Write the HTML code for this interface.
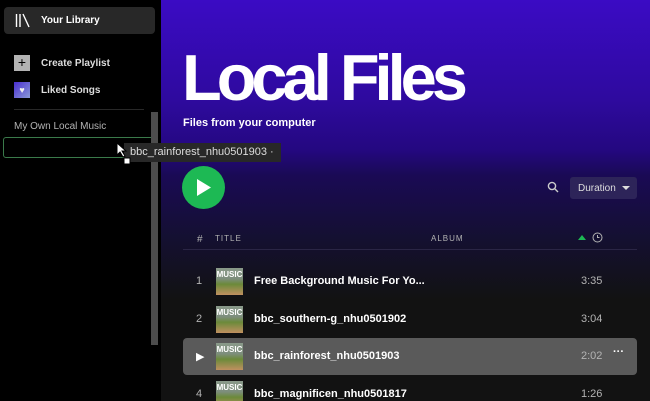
<!DOCTYPE html>
<html style="overflow:hidden;width:650px;height:401px"><head><style>
*{margin:0;padding:0;box-sizing:border-box}
body{width:650px;height:401px;overflow:hidden;background:#000;font-family:"Liberation Sans",sans-serif;position:relative;color:#fff}
.abs{position:absolute}
.side{left:0;top:0;width:161px;height:401px;background:#000}
.main{left:161px;top:0;width:489px;height:401px;background:linear-gradient(#3b0bc4 0px,#2e0a9e 100px,#240880 150px,#1a0a55 175px,#141030 240px,#121212 300px)}
.thumb{width:27px;height:27px;background:linear-gradient(#8a9a8a 0,#7d8e7c 40%,#6b8a3a 60%,#c09060 100%);font-size:8px;font-weight:bold;color:#fff;text-align:center;line-height:14px}
.row{left:183px;width:454px;height:37px;font-size:11px}
.row .n{position:absolute;left:13px;top:12px;color:#b3b3b3;font-size:11px}
.row .thumb{position:absolute;left:33px;top:5px}
.row .t{position:absolute;left:71px;top:12px;font-weight:bold;color:#fff}
.row .d{position:absolute;left:398px;top:12px;color:#b3b3b3}
</style></head><body>
<div class="abs side">
 <div class="abs" style="left:4px;top:7px;width:151px;height:27px;background:#282828;border-radius:4px"></div>
 <svg class="abs" style="left:15px;top:13px" width="16" height="15"><path d="M1.5 1 V14 M5 1 V14 M8 1 L14 14" stroke="#fff" stroke-width="1.4" fill="none"/></svg>
 <div class="abs" style="left:41px;top:15px;font-size:10px;font-weight:bold">Your Library</div>
 <div class="abs" style="left:14px;top:55px;width:16px;height:16px;background:#b3b3b3;color:#000;font-size:14px;text-align:center;line-height:15px">+</div>
 <div class="abs" style="left:41px;top:58px;font-size:10px;font-weight:bold;color:#ddd">Create Playlist</div>
 <div class="abs" style="left:14px;top:82px;width:16px;height:16px;background:linear-gradient(135deg,#4a2fd0,#8a9ad8);color:#eee;font-size:9px;text-align:center;line-height:16px">♥</div>
 <div class="abs" style="left:41px;top:85px;font-size:10px;font-weight:bold;color:#ddd">Liked Songs</div>
 <div class="abs" style="left:14px;top:109px;width:130px;height:1px;background:#282828"></div>
 <div class="abs" style="left:14px;top:121px;font-size:10px;color:#b3b3b3">My Own Local Music</div>
 <div class="abs" style="left:3px;top:137px;width:152px;height:21px;border:1px solid #3a7a4a;border-radius:3px"></div>
 <div class="abs" style="left:151px;top:112px;width:7px;height:233px;background:#4d4d4d"></div>
</div>
<div class="abs main"></div>
<div class="abs" style="left:182px;top:43px;font-size:65px;font-weight:bold;letter-spacing:-5px;line-height:70px">Local Files</div>
<div class="abs" style="left:183px;top:117px;font-size:11px;font-weight:bold">Files from your computer</div>
<div class="abs" style="left:124px;top:143px;width:157px;height:19px;background:#282828"></div>
<div class="abs" style="left:130px;top:146px;font-size:11px;color:#ddd">bbc_rainforest_nhu0501903 ·</div>
<svg class="abs" style="left:115px;top:142px" width="16" height="22"><path d="M2 1 L2 13 L5 10 L8 15 L10 14 L7 9 L11 9 Z" fill="#fff" stroke="#000" stroke-width="1"/><rect x="9" y="16" width="6" height="6" fill="#fff" stroke="#000"/></svg>
<div class="abs" style="left:182px;top:166px;width:43px;height:43px;border-radius:50%;background:#1db954"></div>
<svg class="abs" style="left:196px;top:178px" width="16" height="19"><path d="M1 1 L15 9.5 L1 18 Z" fill="#fff"/></svg>
<svg class="abs" style="left:547px;top:181px" width="12" height="12"><circle cx="5" cy="5" r="3.6" fill="none" stroke="#ccc" stroke-width="1.4"/><path d="M7.8 7.8 L11 11" stroke="#ccc" stroke-width="1.4"/></svg>
<div class="abs" style="left:570px;top:177px;width:67px;height:22px;background:#2d2459;border-radius:3px"></div>
<div class="abs" style="left:578px;top:183px;font-size:10px;color:#ddd">Duration</div>
<svg class="abs" style="left:622px;top:186px" width="8" height="5"><path d="M0 0 L8 0 L4 4 Z" fill="#ddd"/></svg>
<div class="abs" style="left:197px;top:234px;font-size:10px;color:#b3b3b3">#</div>
<div class="abs" style="left:215px;top:234px;font-size:8px;color:#b3b3b3;letter-spacing:1px">TITLE</div>
<div class="abs" style="left:431px;top:234px;font-size:8px;color:#b3b3b3;letter-spacing:1px">ALBUM</div>
<svg class="abs" style="left:578px;top:235px" width="8" height="5"><path d="M0 5 L8 5 L4 0 Z" fill="#1db954"/></svg>
<svg class="abs" style="left:592px;top:232px" width="11" height="11"><circle cx="5.5" cy="5.5" r="4.5" fill="none" stroke="#b3b3b3"/><path d="M5.5 3 V5.5 H7.5" stroke="#b3b3b3" fill="none"/></svg>
<div class="abs" style="left:183px;top:249px;width:454px;height:1px;background:#2a2545"></div>
<div class="abs row" style="top:263px"><span class="n">1</span><div class="thumb">MUSIC</div><span class="t">Free Background Music For Yo...</span><span class="d">3:35</span></div>
<div class="abs row" style="top:301px"><span class="n">2</span><div class="thumb">MUSIC</div><span class="t">bbc_southern-g_nhu0501902</span><span class="d">3:04</span></div>
<div class="abs row" style="top:338px;background:#5a5a5a;border-radius:4px"><span class="n" style="color:#fff">▶</span><div class="thumb">MUSIC</div><span class="t">bbc_rainforest_nhu0501903</span><span class="d">2:02</span><span style="position:absolute;left:430px;top:8px;color:#fff;font-weight:bold">···</span></div>
<div class="abs row" style="top:376px;height:25px;overflow:hidden"><span class="n">4</span><div class="thumb">MUSIC</div><span class="t">bbc_magnificen_nhu0501817</span><span class="d">1:26</span></div>
</body></html>
